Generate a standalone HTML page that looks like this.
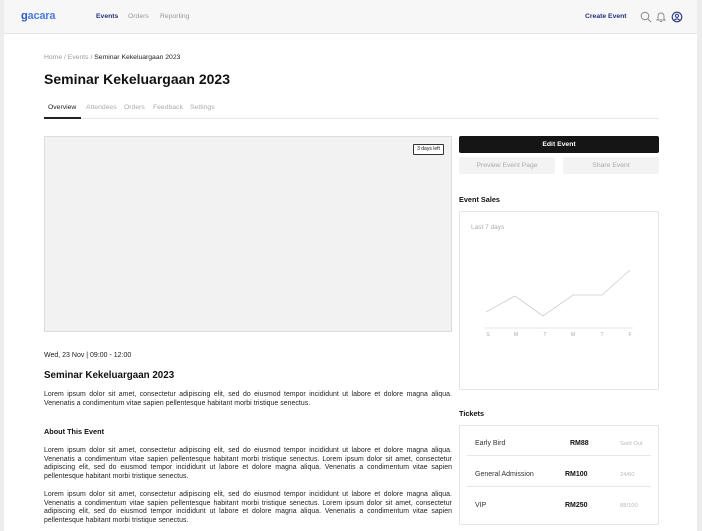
<!DOCTYPE html>
<html><head><meta charset="utf-8"><style>
*{margin:0;padding:0;box-sizing:border-box}
body{width:702px;height:531px;overflow:hidden;background:#ededed;font-family:"Liberation Sans",sans-serif;color:#111;position:relative}
.page{position:absolute;left:4px;top:0;width:693px;height:531px;background:#fff}
.hdr{position:absolute;left:4px;top:0;width:693px;height:34px;background:#f7f7f7;border-bottom:1px solid #e4e4e4}
.a{position:absolute;white-space:nowrap}
.p{position:absolute;left:44px;width:408px;font-size:6.9px;line-height:8.6px;text-align:justify;color:#222;white-space:normal;letter-spacing:0.05px}
.btn{position:absolute;height:17px;font-size:6.8px;text-align:center;line-height:17px;border-radius:2px}
.tk{font-size:7px}
</style></head><body>
<div class="page"></div>
<div class="hdr"></div>
<div class="a" style="left:21px;top:10px;font-size:11px;font-weight:bold;color:#2b58c8;letter-spacing:-0.2px">g<span style="color:#4a7de0">acara</span></div>
<div class="a" style="left:96px;top:13px;font-size:6.8px;color:#22337a;font-weight:bold">Events</div>
<div class="a" style="left:128px;top:13px;font-size:6.8px;color:#999">Orders</div>
<div class="a" style="left:160px;top:13px;font-size:6.8px;color:#999">Reporting</div>
<div class="a" style="left:585px;top:13px;font-size:6.8px;color:#22337a;font-weight:bold">Create Event</div>
<svg class="a" style="left:640px;top:11px" width="12" height="12" viewBox="0 0 12 12"><circle cx="5" cy="5" r="3.8" fill="none" stroke="#888" stroke-width="1"/><path d="M8 8l3 3" stroke="#888" stroke-width="1"/></svg>
<svg class="a" style="left:656px;top:11px" width="10" height="12" viewBox="0 0 10 12"><path d="M2 8V5a3 3 0 0 1 6 0v3l1 1H1z M4 10.5h2" fill="none" stroke="#888" stroke-width="0.9"/></svg>
<svg class="a" style="left:671px;top:11px" width="12" height="12" viewBox="0 0 12 12"><circle cx="6" cy="6" r="4.8" fill="none" stroke="#22337a" stroke-width="1.1"/><circle cx="6" cy="4.8" r="1.6" fill="none" stroke="#22337a" stroke-width="1"/><path d="M3.2 9.4c1.5-2 4.1-2 5.6 0" fill="none" stroke="#22337a" stroke-width="1"/></svg>

<div class="a" style="left:44px;top:54px;font-size:6.8px;color:#999">Home / Events / <span style="color:#222">Seminar Kekeluargaan 2023</span></div>
<div class="a" style="left:44px;top:71px;font-size:14px;font-weight:bold;color:#111">Seminar Kekeluargaan 2023</div>
<div class="a" style="left:48px;top:104px;font-size:6.8px;color:#222">Overview</div>
<div class="a" style="left:86px;top:104px;font-size:6.8px;color:#aaa">Attendees</div>
<div class="a" style="left:124px;top:104px;font-size:6.8px;color:#aaa">Orders</div>
<div class="a" style="left:153px;top:104px;font-size:6.8px;color:#aaa">Feedback</div>
<div class="a" style="left:190px;top:104px;font-size:6.8px;color:#aaa">Settings</div>
<div class="a" style="left:44px;top:118px;width:615px;height:1px;background:#e8e8e8"></div>
<div class="a" style="left:44px;top:117px;width:37px;height:2px;background:#222"></div>

<div class="a" style="left:44px;top:136px;width:408px;height:196px;background:#f2f2f2;border:1px solid #ddd"></div>
<div class="a" style="left:413px;top:144px;width:31px;height:11px;border:1px solid #333;border-radius:1px;background:#fff;font-size:5px;line-height:9px;text-align:center">3 days left</div>

<div class="a" style="left:44px;top:352px;font-size:7px;color:#222">Wed, 23 Nov | 09:00 - 12:00</div>
<div class="a" style="left:44px;top:370px;font-size:9.8px;font-weight:bold">Seminar Kekeluargaan 2023</div>
<div class="p" style="top:391px">Lorem ipsum dolor sit amet, consectetur adipiscing elit, sed do eiusmod tempor incididunt ut labore et dolore magna aliqua. Venenatis a condimentum vitae sapien pellentesque habitant morbi tristique senectus.</div>
<div class="a" style="left:44px;top:427px;font-size:7.3px;font-weight:bold">About This Event</div>
<div class="p" style="top:447px">Lorem ipsum dolor sit amet, consectetur adipiscing elit, sed do eiusmod tempor incididunt ut labore et dolore magna aliqua. Venenatis a condimentum vitae sapien pellentesque habitant morbi tristique senectus. Lorem ipsum dolor sit amet, consectetur adipiscing elit, sed do eiusmod tempor incididunt ut labore et dolore magna aliqua. Venenatis a condimentum vitae sapien pellentesque habitant morbi tristique senectus.</div>
<div class="p" style="top:491px">Lorem ipsum dolor sit amet, consectetur adipiscing elit, sed do eiusmod tempor incididunt ut labore et dolore magna aliqua. Venenatis a condimentum vitae sapien pellentesque habitant morbi tristique senectus. Lorem ipsum dolor sit amet, consectetur adipiscing elit, sed do eiusmod tempor incididunt ut labore et dolore magna aliqua. Venenatis a condimentum vitae sapien pellentesque habitant morbi tristique senectus.</div>

<div class="btn" style="left:459px;top:136px;width:200px;background:#151515;color:#fff;font-weight:bold">Edit Event</div>
<div class="btn" style="left:459px;top:157px;width:96px;background:#f3f3f3;color:#aaa">Preview Event Page</div>
<div class="btn" style="left:563px;top:157px;width:96px;background:#f3f3f3;color:#aaa">Share Event</div>
<div class="a" style="left:459px;top:195px;font-size:7.3px;font-weight:bold">Event Sales</div>
<div class="a" style="left:459px;top:211px;width:200px;height:179px;border:1px solid #e4e4e4;border-radius:2px"></div>
<div class="a" style="left:471px;top:224px;font-size:6.5px;color:#aaa">Last 7 days</div>
<svg class="a" style="left:459px;top:211px" width="200" height="179"><polyline points="27,101 56,85 84,105 114,84 143,84 171,59" fill="none" stroke="#ccc" stroke-width="0.8"/><line x1="26" y1="117" x2="174" y2="117" stroke="#ddd" stroke-width="0.8"/>
<g font-family="Liberation Sans" font-size="5" fill="#aaa" text-anchor="middle"><text x="29" y="125">S</text><text x="57" y="125">M</text><text x="86" y="125">T</text><text x="114" y="125">W</text><text x="143" y="125">T</text><text x="171" y="125">F</text></g></svg>

<div class="a" style="left:459px;top:409px;font-size:7.3px;font-weight:bold">Tickets</div>
<div class="a" style="left:459px;top:425px;width:200px;height:100px;border:1px solid #e4e4e4;border-radius:2px"></div>
<div class="a" style="left:467px;top:455px;width:184px;height:1px;background:#e8e8e8"></div>
<div class="a" style="left:467px;top:486px;width:184px;height:1px;background:#e8e8e8"></div>
<div class="a tk" style="left:475px;top:440px;color:#333">Early Bird</div>
<div class="a tk" style="left:570px;top:440px;font-weight:bold">RM88</div>
<div class="a" style="left:620px;top:441px;font-size:5.8px;color:#bbb">Sold Out</div>
<div class="a tk" style="left:475px;top:471px;color:#333">General Admission</div>
<div class="a tk" style="left:565px;top:471px;font-weight:bold">RM100</div>
<div class="a" style="left:620px;top:472px;font-size:5.8px;color:#bbb">24/60</div>
<div class="a tk" style="left:475px;top:502px;color:#333">VIP</div>
<div class="a tk" style="left:565px;top:502px;font-weight:bold">RM250</div>
<div class="a" style="left:620px;top:503px;font-size:5.8px;color:#bbb">88/100</div>
</body></html>
